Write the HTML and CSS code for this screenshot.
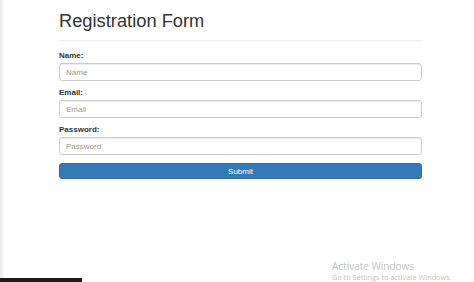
FILE: index.html
```
<!DOCTYPE html>
<html>
<head>
<meta charset="utf-8">
<link rel="stylesheet" href="styles.css">
</head>
<body>
<div class="edge"></div>
<main class="container">
  <h1 class="title">Registration Form</h1>
  <hr class="rule">
  <form class="form">
    <div class="group">
      <label class="label">Name:</label>
      <input class="field" type="text" placeholder="Name">
    </div>
    <div class="group">
      <label class="label">Email:</label>
      <input class="field" type="text" placeholder="Email">
    </div>
    <div class="group">
      <label class="label">Password:</label>
      <input class="field" type="password" placeholder="Password">
    </div>
    <button class="submit" type="button">Submit</button>
  </form>
</main>
<div class="taskbar"></div>
<div class="watermark">
  <div class="wm-title">Activate Windows</div>
  <div class="wm-sub">Go to Settings to activate Windows.</div>
</div>
</body>
</html>
```
FILE: styles.css
```
html, body {
  margin: 0;
  padding: 0;
  width: 474px;
  height: 282px;
  overflow: hidden;
  background: #fff;
  font-family: "Liberation Sans", Arial, sans-serif;
  color: #333;
}
.edge {
  position: absolute;
  left: 0;
  top: 0;
  width: 3px;
  height: 282px;
  background: #eeeeee;
}
.container {
  width: 364px;
  margin-left: 59px;
  padding-top: 9px;
}
.title {
  margin: 0;
  font-size: 18.3px;
  font-weight: 400;
  line-height: 24px;
  color: #333;
}
.rule {
  margin: 7px 0 10px;
  border: 0;
  border-top: 1px solid #eeeeee;
}
.form {
  display: flex;
  flex-direction: column;
}
.group {
  display: flex;
  flex-direction: column;
  margin-bottom: 7px;
}
.label {
  font-size: 8px;
  font-weight: 700;
  line-height: 10px;
  margin-bottom: 2px;
  color: #333;
}
.field {
  box-sizing: border-box;
  height: 18px;
  width: 363px;
  border: 1px solid #cccccc;
  border-radius: 3px;
  padding: 0 6px;
  font-family: "Liberation Sans", Arial, sans-serif;
  font-size: 8px;
  color: #555;
  box-shadow: inset 0 1px 1px rgba(0,0,0,0.075);
  outline: none;
}
.field::placeholder {
  color: #999;
}
.submit {
  box-sizing: border-box;
  height: 16px;
  width: 363px;
  margin-top: 1px;
  background: #337ab7;
  border: 1px solid #2e6da4;
  border-radius: 3px;
  color: #fff;
  font-family: "Liberation Sans", Arial, sans-serif;
  font-size: 8px;
  padding: 0;
}
.taskbar {
  position: absolute;
  left: 0;
  bottom: 0;
  width: 82px;
  height: 4px;
  background: #1a1a1a;
}
.watermark {
  position: absolute;
  left: 332px;
  top: 260px;
  color: #c4c4c4;
  font-family: "Open Sans", "DejaVu Sans", sans-serif;
}
.wm-title {
  font-size: 10px;
  line-height: 12px;
}
.wm-sub {
  font-size: 7.3px;
  line-height: 10px;
}
```
